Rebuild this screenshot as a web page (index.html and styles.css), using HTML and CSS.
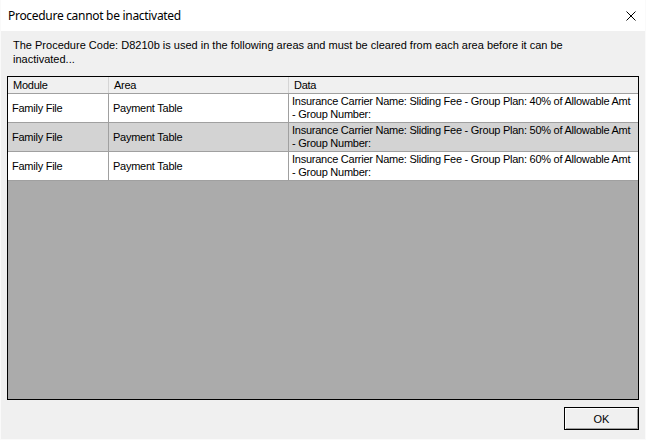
FILE: index.html
```html
<!DOCTYPE html>
<html lang="en">
<head>
    <meta charset="UTF-8">
    <meta name="viewport" content="width=device-width, initial-scale=1.0">
    <title>Procedure cannot be inactivated</title>
    <link rel="stylesheet" href="styles.css">
</head>
<body>

    <div class="dialog">
        <div class="titlebar">
            <span class="title">Procedure cannot be inactivated</span>
            <svg class="close" width="10" height="10" viewBox="0 0 10 10">
                <path d="M0.5 0.5 L9.5 9.5 M9.5 0.5 L0.5 9.5" stroke="#000" stroke-width="1" fill="none"/>
            </svg>
        </div>

        <div class="body">
            <div class="message">The Procedure Code: D8210b is used in the following areas and must be cleared from each area before it can be inactivated...</div>

            <div class="grid">
                <div class="grid-row header">
                    <div class="cell">Module</div>
                    <div class="cell">Area</div>
                    <div class="cell">Data</div>
                </div>
                <div class="grid-row">
                    <div class="cell">Family File</div>
                    <div class="cell">Payment Table</div>
                    <div class="cell data">Insurance Carrier Name: Sliding Fee - Group Plan: 40% of Allowable Amt - Group Number:</div>
                </div>
                <div class="grid-row selected">
                    <div class="cell">Family File</div>
                    <div class="cell">Payment Table</div>
                    <div class="cell data">Insurance Carrier Name: Sliding Fee - Group Plan: 50% of Allowable Amt - Group Number:</div>
                </div>
                <div class="grid-row">
                    <div class="cell">Family File</div>
                    <div class="cell">Payment Table</div>
                    <div class="cell data">Insurance Carrier Name: Sliding Fee - Group Plan: 60% of Allowable Amt - Group Number:</div>
                </div>
            </div>

            <div class="actions">
                <button class="btn">OK</button>
            </div>
        </div>
    </div>

</body>
</html>
```

FILE: styles.css
```css
* {
    box-sizing: border-box;
}

body {
    margin: 0;
    background-color: #f0f0f0;
    font-family: "Liberation Sans", Arial, sans-serif;
    font-size: 11px;
    color: #000;
}

.dialog {
    width: 646px;
    height: 440px;
    border: 1px solid #fafafa;
    border-top: none;
    display: flex;
    flex-direction: column;
}

.titlebar {
    height: 31px;
    background-color: #fff;
    display: flex;
    align-items: center;
    justify-content: space-between;
    padding: 0 9px 0 7px;
}

.title {
    font-family: "Noto Sans", sans-serif;
    font-size: 12px;
    letter-spacing: -0.3px;
}

.close {
    display: block;
}

.body {
    flex: 1;
    padding: 7px 6px 0 6px;
}

.message {
    width: 590px;
    line-height: 14px;
    padding: 0 6px;
    margin-bottom: 10px;
}

.grid {
    height: 324px;
    border: 1px solid #000;
    background-color: #ababab;
}

.grid-row {
    display: grid;
    grid-template-columns: 101px 180px 1fr;
    height: 29px;
    background-color: #fff;
    border-bottom: 1px solid #a0a0a0;
    letter-spacing: -0.25px;
}

.grid-row.selected {
    background-color: #d3d3d3;
}

.grid-row.header {
    height: 17px;
    background-color: #f0f0f0;
}

.cell {
    display: flex;
    align-items: center;
    padding: 0 4px;
    border-right: 1px solid #a0a0a0;
    line-height: 13px;
}

.cell:last-child {
    border-right: none;
}

.header .cell {
    border-right-color: #d5d5d5;
    padding-left: 5px;
}

.data {
    padding: 0 3px;
}

.actions {
    display: flex;
    justify-content: flex-end;
    padding-top: 7px;
}

.btn {
    width: 75px;
    height: 23px;
    font-family: "Liberation Sans", Arial, sans-serif;
    font-size: 11px;
    background-color: #f0f0f0;
    border: 1px solid #000;
    box-shadow: inset 1px 1px #fff, inset -1px -1px #a0a0a0;
    padding: 0;
}
```
